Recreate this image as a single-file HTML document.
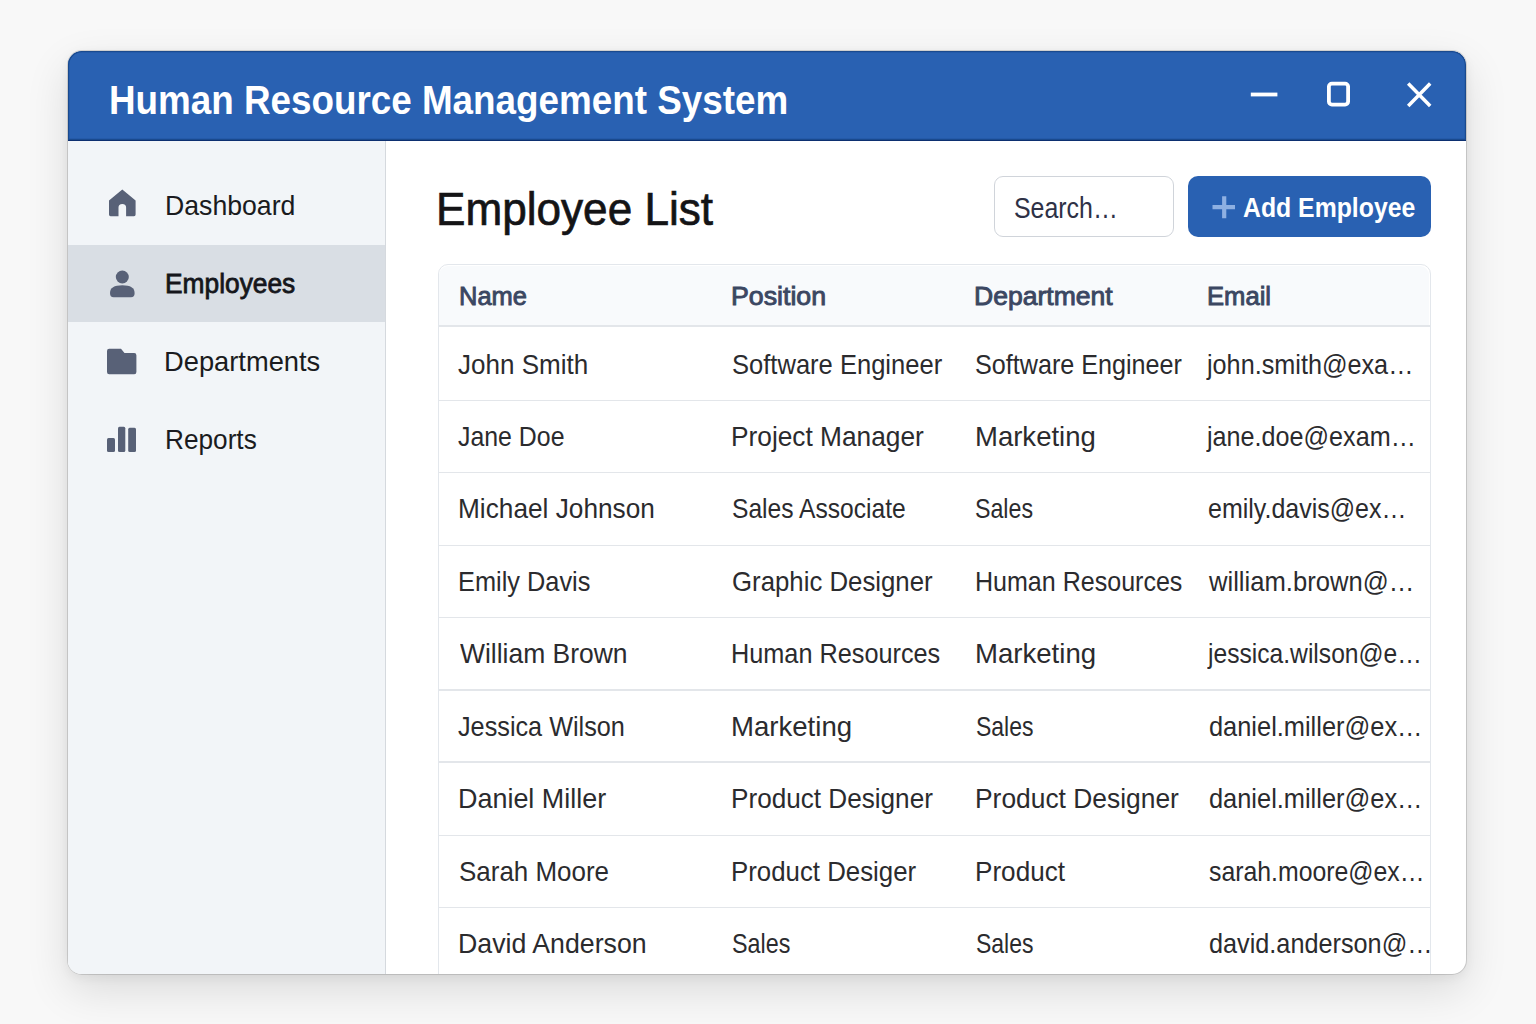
<!DOCTYPE html>
<html><head><meta charset="utf-8"><style>
*{box-sizing:border-box;margin:0;padding:0}
html,body{width:1536px;height:1024px;overflow:hidden}
body{background:#f8f8f8;font-family:"Liberation Sans",sans-serif;position:relative}
.t{position:absolute;white-space:nowrap;transform-origin:0 0}
.abs{position:absolute}
</style></head><body>
<div class="abs" style="left:67.5px;top:51px;width:1398.5px;height:923px;border-radius:14px;background:#fff;box-shadow:0 0 0 1px rgba(0,0,0,0.13),0 16px 44px rgba(0,0,0,0.12),0 3px 12px rgba(0,0,0,0.06)"></div>
<div class="abs" style="left:0;top:0;width:1536px;height:1024px;clip-path:inset(51px 70px 50px 67.5px round 14px)">
<div class="abs" style="left:67.5px;top:51px;width:1398.5px;height:89px;background:#2961b2;border-radius:14px 14px 0 0;box-shadow:inset 0 0 0 1.2px #1a4a8e"></div>
<div class="abs" style="left:67.5px;top:139.6px;width:1398.5px;height:1.3px;background:#0c2f70"></div>
<svg class="abs" style="left:1240px;top:70px" width="200" height="50"><rect x="10.8" y="22.6" width="26.6" height="3.8" fill="#fff"/><rect x="88.9" y="13.6" width="19.2" height="21" rx="3" fill="none" stroke="#fff" stroke-width="3.8"/><path d="M168.2 13.6 L190.2 35.9 M190.2 13.6 L168.2 35.9" stroke="#fff" stroke-width="3.5" fill="none"/></svg>
<div class="abs" style="left:67.5px;top:140.9px;width:317.5px;height:834px;background:#f2f5f8"></div>
<div class="abs" style="left:384.8px;top:140.9px;width:1.4px;height:834px;background:#d5d9de"></div>
<div class="abs" style="left:67.5px;top:245px;width:317.5px;height:76.8px;background:#d9dee4"></div>
<svg class="abs" style="left:100px;top:180px" width="45" height="280" fill="#586177"><path d="M9 20.5 L22.3 9.5 L35.6 20.5 L35.6 34.5 Q35.6 36.2 34 36.2 L26.1 36.2 L26.1 27.5 Q26.1 24 22.3 24 Q18.5 24 18.5 27.5 L18.5 36.2 L10.6 36.2 Q9 36.2 9 34.5 Z"/><circle cx="22.3" cy="97" r="6.5"/><path d="M10 113 Q10 105.3 22.3 105.3 Q34.6 105.3 34.6 113 Q34.6 117.3 31 117.3 L13.6 117.3 Q10 117.3 10 113 Z"/><path d="M7 171 Q7 168.8 9.2 168.8 L21 168.8 L24.5 173 L34.2 173 Q36.4 173 36.4 175.2 L36.4 192 Q36.4 194.2 34.2 194.2 L9.2 194.2 Q7 194.2 7 192 Z"/><rect x="7" y="258" width="8" height="14" rx="1.5"/><rect x="18" y="246.7" width="7.3" height="25.3" rx="1.5"/><rect x="28.2" y="247.8" width="7.8" height="24.2" rx="1.5"/></svg>
<div class="abs" style="left:994px;top:175.8px;width:179.5px;height:61.3px;border:1.5px solid #d0d4da;border-radius:9px;background:#fff"></div>
<div class="abs" style="left:1188px;top:175.6px;width:242.8px;height:61.8px;border-radius:10px;background:#2961b2"></div>
<svg class="abs" style="left:1210px;top:193px" width="30" height="30"><path d="M2.5 14.2 H25 M14.2 3.2 V25.2" stroke="#8eb0e2" stroke-width="4.2"/></svg>
<div class="abs" style="left:437.5px;top:264px;width:993.0px;height:760px;border:1.5px solid #e3e7ec;border-radius:10px;background:#fff"></div>
<div class="abs" style="left:439.0px;top:265.5px;width:990.0px;height:60.5px;border-radius:9px 9px 0 0;background:#f8fafc"></div>
<div class="abs" style="left:438.5px;top:325.4px;width:991.0px;height:1.2px;background:#e3e6ea"></div>
<div class="abs" style="left:438.5px;top:399.7px;width:991.0px;height:1.2px;background:#e3e6ea"></div>
<div class="abs" style="left:438.5px;top:472.0px;width:991.0px;height:1.2px;background:#e3e6ea"></div>
<div class="abs" style="left:438.5px;top:544.6999999999999px;width:991.0px;height:1.2px;background:#e3e6ea"></div>
<div class="abs" style="left:438.5px;top:617.3px;width:991.0px;height:1.2px;background:#e3e6ea"></div>
<div class="abs" style="left:438.5px;top:689.4px;width:991.0px;height:1.2px;background:#e3e6ea"></div>
<div class="abs" style="left:438.5px;top:761.4px;width:991.0px;height:1.2px;background:#e3e6ea"></div>
<div class="abs" style="left:438.5px;top:834.9px;width:991.0px;height:1.2px;background:#e3e6ea"></div>
<div class="abs" style="left:438.5px;top:906.6px;width:991.0px;height:1.2px;background:#e3e6ea"></div>
<div class="t" style="left:108.78px;top:80.09px;font-size:40.6px;line-height:40.6px;font-weight:700;color:#fff;transform:scaleX(0.9071);">Human Resource Management System</div>
<div class="t" style="left:164.50px;top:192.00px;font-size:28px;line-height:28px;font-weight:400;color:#1a1b20;transform:scaleX(0.9519);">Dashboard</div>
<div class="t" style="left:164.82px;top:269.50px;font-size:28px;line-height:28px;font-weight:400;color:#15161b;transform:scaleX(0.9404);-webkit-text-stroke:0.8px #15161b;">Employees</div>
<div class="t" style="left:164.45px;top:348.40px;font-size:28px;line-height:28px;font-weight:400;color:#1a1b20;transform:scaleX(0.9745);">Departments</div>
<div class="t" style="left:164.53px;top:426.10px;font-size:28px;line-height:28px;font-weight:400;color:#1a1b20;transform:scaleX(0.9358);">Reports</div>
<div class="t" style="left:435.95px;top:186.46px;font-size:46.4px;line-height:46.4px;font-weight:400;color:#141416;transform:scaleX(0.9509);-webkit-text-stroke:0.7px #141416;">Employee List</div>
<div class="t" style="left:1013.87px;top:193.20px;font-size:30px;line-height:30px;font-weight:400;color:#2e3146;transform:scaleX(0.8300);">Search…</div>
<div class="t" style="left:1243.41px;top:193.60px;font-size:28px;line-height:28px;font-weight:700;color:#fff;transform:scaleX(0.8860);">Add Employee</div>
<div class="t" style="left:458.72px;top:283.55px;font-size:25.7px;line-height:25.7px;font-weight:400;color:#3b4762;transform:scaleX(0.9924);-webkit-text-stroke:0.9px #3b4762;">Name</div>
<div class="t" style="left:730.72px;top:283.55px;font-size:25.7px;line-height:25.7px;font-weight:400;color:#3b4762;transform:scaleX(1.0398);-webkit-text-stroke:0.9px #3b4762;">Position</div>
<div class="t" style="left:973.93px;top:283.55px;font-size:25.7px;line-height:25.7px;font-weight:400;color:#3b4762;transform:scaleX(1.0331);-webkit-text-stroke:0.9px #3b4762;">Department</div>
<div class="t" style="left:1207.21px;top:283.55px;font-size:25.7px;line-height:25.7px;font-weight:400;color:#3b4762;transform:scaleX(0.9967);-webkit-text-stroke:0.9px #3b4762;">Email</div>
<div class="t" style="left:458.20px;top:350.50px;font-size:28px;line-height:28px;font-weight:400;color:#2b2b2e;transform:scaleX(0.9297);">John Smith</div>
<div class="t" style="left:458.20px;top:422.99px;font-size:28px;line-height:28px;font-weight:400;color:#2b2b2e;transform:scaleX(0.8882);">Jane Doe</div>
<div class="t" style="left:458.03px;top:495.48px;font-size:28px;line-height:28px;font-weight:400;color:#2b2b2e;transform:scaleX(0.9369);">Michael Johnson</div>
<div class="t" style="left:458.09px;top:567.97px;font-size:28px;line-height:28px;font-weight:400;color:#2b2b2e;transform:scaleX(0.9056);">Emily Davis</div>
<div class="t" style="left:460.00px;top:640.46px;font-size:28px;line-height:28px;font-weight:400;color:#2b2b2e;transform:scaleX(0.9443);">William Brown</div>
<div class="t" style="left:457.90px;top:712.95px;font-size:28px;line-height:28px;font-weight:400;color:#2b2b2e;transform:scaleX(0.9011);">Jessica Wilson</div>
<div class="t" style="left:458.08px;top:785.44px;font-size:28px;line-height:28px;font-weight:400;color:#2b2b2e;transform:scaleX(0.9618);">Daniel Miller</div>
<div class="t" style="left:459.07px;top:857.93px;font-size:28px;line-height:28px;font-weight:400;color:#2b2b2e;transform:scaleX(0.9269);">Sarah Moore</div>
<div class="t" style="left:458.09px;top:930.42px;font-size:28px;line-height:28px;font-weight:400;color:#2b2b2e;transform:scaleX(0.9546);">David Anderson</div>
<div class="t" style="left:732.29px;top:350.50px;font-size:28px;line-height:28px;font-weight:400;color:#2b2b2e;transform:scaleX(0.9122);">Software Engineer</div>
<div class="t" style="left:731.32px;top:422.99px;font-size:28px;line-height:28px;font-weight:400;color:#2b2b2e;transform:scaleX(0.9384);">Project Manager</div>
<div class="t" style="left:732.32px;top:495.48px;font-size:28px;line-height:28px;font-weight:400;color:#2b2b2e;transform:scaleX(0.8791);">Sales Associate</div>
<div class="t" style="left:732.28px;top:567.97px;font-size:28px;line-height:28px;font-weight:400;color:#2b2b2e;transform:scaleX(0.9207);">Graphic Designer</div>
<div class="t" style="left:731.30px;top:640.46px;font-size:28px;line-height:28px;font-weight:400;color:#2b2b2e;transform:scaleX(0.9022);">Human Resources</div>
<div class="t" style="left:731.13px;top:712.95px;font-size:28px;line-height:28px;font-weight:400;color:#2b2b2e;transform:scaleX(0.9849);">Marketing</div>
<div class="t" style="left:731.23px;top:785.44px;font-size:28px;line-height:28px;font-weight:400;color:#2b2b2e;transform:scaleX(0.9332);">Product Designer</div>
<div class="t" style="left:731.26px;top:857.93px;font-size:28px;line-height:28px;font-weight:400;color:#2b2b2e;transform:scaleX(0.9221);">Product Desiger</div>
<div class="t" style="left:732.27px;top:930.42px;font-size:28px;line-height:28px;font-weight:400;color:#2b2b2e;transform:scaleX(0.8324);">Sales</div>
<div class="t" style="left:975.20px;top:350.50px;font-size:28px;line-height:28px;font-weight:400;color:#2b2b2e;transform:scaleX(0.8983);">Software Engineer</div>
<div class="t" style="left:975.04px;top:422.99px;font-size:28px;line-height:28px;font-weight:400;color:#2b2b2e;transform:scaleX(0.9824);">Marketing</div>
<div class="t" style="left:975.27px;top:495.48px;font-size:28px;line-height:28px;font-weight:400;color:#2b2b2e;transform:scaleX(0.8279);">Sales</div>
<div class="t" style="left:975.21px;top:567.97px;font-size:28px;line-height:28px;font-weight:400;color:#2b2b2e;transform:scaleX(0.8943);">Human Resources</div>
<div class="t" style="left:974.63px;top:640.46px;font-size:28px;line-height:28px;font-weight:400;color:#2b2b2e;transform:scaleX(0.9849);">Marketing</div>
<div class="t" style="left:975.78px;top:712.95px;font-size:28px;line-height:28px;font-weight:400;color:#2b2b2e;transform:scaleX(0.8206);">Sales</div>
<div class="t" style="left:974.71px;top:785.44px;font-size:28px;line-height:28px;font-weight:400;color:#2b2b2e;transform:scaleX(0.9425);">Product Designer</div>
<div class="t" style="left:974.73px;top:857.93px;font-size:28px;line-height:28px;font-weight:400;color:#2b2b2e;transform:scaleX(0.9326);">Product</div>
<div class="t" style="left:975.78px;top:930.42px;font-size:28px;line-height:28px;font-weight:400;color:#2b2b2e;transform:scaleX(0.8206);">Sales</div>
<div class="t" style="left:1207.30px;top:350.50px;font-size:28px;line-height:28px;font-weight:400;color:#2b2b2e;transform:scaleX(0.9004);">john.smith@exa…</div>
<div class="t" style="left:1207.30px;top:422.99px;font-size:28px;line-height:28px;font-weight:400;color:#2b2b2e;transform:scaleX(0.8987);">jane.doe@exam…</div>
<div class="t" style="left:1208.41px;top:495.48px;font-size:28px;line-height:28px;font-weight:400;color:#2b2b2e;transform:scaleX(0.8922);">emily.davis@ex…</div>
<div class="t" style="left:1209.30px;top:567.97px;font-size:28px;line-height:28px;font-weight:400;color:#2b2b2e;transform:scaleX(0.9145);">william.brown@…</div>
<div class="t" style="left:1207.98px;top:640.46px;font-size:28px;line-height:28px;font-weight:400;color:#2b2b2e;transform:scaleX(0.8793);">jessica.wilson@e…</div>
<div class="t" style="left:1208.59px;top:712.95px;font-size:28px;line-height:28px;font-weight:400;color:#2b2b2e;transform:scaleX(0.9069);">daniel.miller@ex…</div>
<div class="t" style="left:1208.59px;top:785.44px;font-size:28px;line-height:28px;font-weight:400;color:#2b2b2e;transform:scaleX(0.9069);">daniel.miller@ex…</div>
<div class="t" style="left:1208.61px;top:857.93px;font-size:28px;line-height:28px;font-weight:400;color:#2b2b2e;transform:scaleX(0.8866);">sarah.moore@ex…</div>
<div class="t" style="left:1208.60px;top:930.42px;font-size:28px;line-height:28px;font-weight:400;color:#2b2b2e;transform:scaleX(0.9016);">david.anderson@…</div>
</div>
</body></html>
